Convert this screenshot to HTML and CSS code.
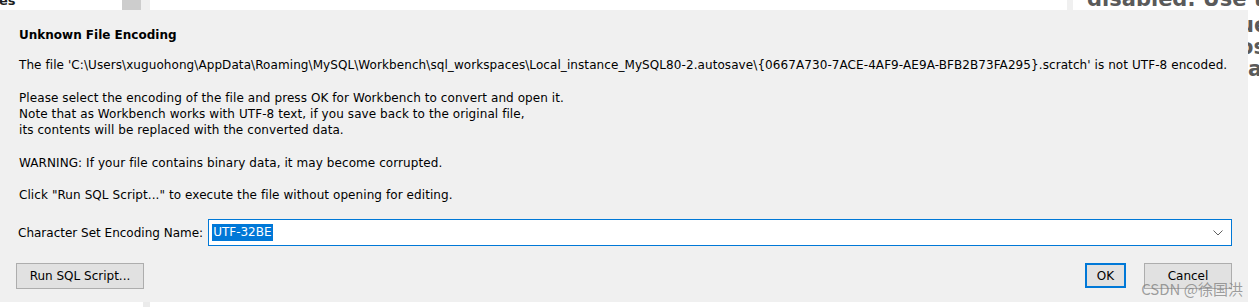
FILE: index.html
```html
<!DOCTYPE html>
<html lang="en">
<head>
    <meta charset="UTF-8">
    <title>Unknown File Encoding</title>
    <link rel="stylesheet" href="styles.css">
</head>
<body>
    <div class="screen">
        <div class="top-strip">
            <div class="tree-pane"><span class="tree-text">es</span></div>
            <div class="scroll-thumb"></div>
            <div class="scroll-gap"></div>
            <div class="editor-pane"></div>
            <div class="pane-split"></div>
            <div class="help-pane"><span class="help-text">disabled. Use the</span></div>
        </div>

        <div class="middle">
            <div class="dialog">
                <h1 class="title">Unknown File Encoding</h1>
                <p class="line long">The file 'C:\Users\xuguohong\AppData\Roaming\MySQL\Workbench\sql_workspaces\Local_instance_MySQL80-2.autosave\{0667A730-7ACE-4AF9-AE9A-BFB2B73FA295}.scratch' is not UTF-8 encoded.</p>
                <p class="line para">Please select the encoding of the file and press OK for Workbench to convert and open it.<br>Note that as Workbench works with UTF-8 text, if you save back to the original file,<br>its contents will be replaced with the converted data.</p>
                <p class="line">WARNING: If your file contains binary data, it may become corrupted.</p>
                <p class="line">Click "Run SQL Script..." to execute the file without opening for editing.</p>

                <div class="field-row">
                    <label class="field-label">Character Set Encoding Name:</label>
                    <div class="combo">
                        <span class="combo-value">UTF-32BE</span>
                        <svg class="chevron" width="10" height="6" viewBox="0 0 10 6">
                            <path d="M0.5 0.5 L5 5 L9.5 0.5" fill="none" stroke="#606060" stroke-width="1"/>
                        </svg>
                    </div>
                </div>

                <div class="button-row">
                    <button class="btn btn-run">Run SQL Script...</button>
                    <div class="spacer"></div>
                    <button class="btn btn-ok">OK</button>
                    <button class="btn btn-cancel">Cancel</button>
                </div>
                <span class="watermark">CSDN @徐国洪</span>
            </div>
            <div class="help-edge">
                <span>ue</span>
                <span>os</span>
                <span>a</span>
            </div>
        </div>

        <div class="bottom-strip">
            <div class="bottom-left"></div>
            <div class="bottom-split"></div>
            <div class="bottom-right"></div>
        </div>
    </div>
</body>
</html>
```

FILE: styles.css
```css
* {
    margin: 0;
    padding: 0;
    box-sizing: border-box;
}

body {
    background: #ffffff;
    font-family: 'DejaVu Sans', sans-serif;
    overflow: hidden;
}

.screen {
    width: 1259px;
    height: 307px;
    display: flex;
    flex-direction: column;
    overflow: hidden;
}

/* window behind the dialog */
.top-strip {
    height: 10px;
    display: flex;
    overflow: hidden;
}

.tree-pane {
    width: 122px;
    background: #ffffff;
    position: relative;
}

.tree-text {
    position: absolute;
    left: -1px;
    top: -7px;
    font-size: 13px;
    font-weight: bold;
    color: #1e1e1e;
}

.scroll-thumb {
    width: 19px;
    background: #cdcdcd;
}

.scroll-gap {
    width: 9px;
    background: #f0f0f0;
}

.editor-pane {
    width: 917px;
    background: #ffffff;
}

.pane-split {
    width: 6px;
    background: #f0f0f0;
}

.help-pane {
    flex: 1;
    position: relative;
    background: #ffffff;
}

.help-text {
    position: absolute;
    left: 14px;
    top: -13px;
    font-size: 21px;
    font-weight: bold;
    color: #5a5a5a;
    white-space: nowrap;
}

.middle {
    height: 292px;
    display: flex;
}

.dialog {
    width: 1248px;
    background: #f0f0f0;
    padding: 17px 16px 0 19px;
    font-size: 12px;
    color: #000000;
    position: relative;
}

.title {
    font-size: 12px;
    font-weight: bold;
    line-height: 16px;
    margin-bottom: 14px;
}

.line {
    line-height: 16px;
    margin-bottom: 16px;
    white-space: nowrap;
    letter-spacing: 0.08px;
}

.long {
    margin-bottom: 17px;
}

.para {
    margin-bottom: 17px;
}

.field-row {
    display: flex;
    align-items: center;
    margin-left: -1px;
    margin-top: 4px;
}

.field-label {
    margin-right: 5px;
}

.combo {
    flex: 1;
    height: 27px;
    border: 1px solid #0078d7;
    background: #ffffff;
    display: flex;
    align-items: center;
    padding: 0 8px 0 3px;
}

.combo-value {
    background: #0078d7;
    color: #ffffff;
    padding: 0 1px;
    line-height: 17px;
}

.chevron {
    margin-left: auto;
}

.button-row {
    display: flex;
    margin-top: 17px;
    margin-left: -3px;
}

.spacer {
    flex: 1;
}

.btn {
    font-family: inherit;
    font-size: 12px;
    color: #000000;
    background: #e1e1e1;
    border: 1px solid #adadad;
    height: 26px;
}

.btn-run {
    width: 128px;
}

.btn-ok {
    width: 41px;
    height: 25px;
    border: 2px solid #0078d7;
    margin-right: 18px;
}

.btn-cancel {
    width: 88px;
}

.watermark {
    position: absolute;
    right: 5px;
    bottom: 3px;
    font-family: 'Noto Sans CJK SC', sans-serif;
    font-size: 15px;
    color: rgba(120, 120, 120, 0.7);
}

.help-edge {
    flex: 1;
    background: #ffffff;
    display: flex;
    flex-direction: column;
    align-items: flex-start;
    overflow: hidden;
    padding-top: 4px;
    font-size: 21px;
    font-weight: bold;
    line-height: 22px;
    color: #5a5a5a;
    white-space: nowrap;
}

.help-edge span {
    margin-left: -9px;
}

.help-edge span:last-child {
    margin-left: 0;
}

.bottom-strip {
    flex: 1;
    display: flex;
}

.bottom-left {
    width: 143px;
    background: #ffffff;
}

.bottom-split {
    width: 7px;
    background: #ebebeb;
}

.bottom-right {
    flex: 1;
    background: #ffffff;
}
```
